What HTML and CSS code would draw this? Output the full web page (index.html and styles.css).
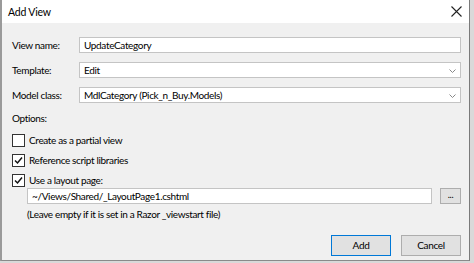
FILE: index.html
```
<!DOCTYPE html>
<html lang="en">
<head>
    <meta charset="UTF-8">
    <title>Add View</title>
    <link rel="stylesheet" href="styles.css">
</head>
<body>
    <div class="dialog">
        <div class="titlebar">
            <span class="title">Add View</span>
            <svg class="close" width="11" height="11" viewBox="0 0 11 11">
                <path d="M0.5 0.5 L10.5 10.5 M10.5 0.5 L0.5 10.5" stroke="#222" stroke-width="1.1" fill="none"/>
            </svg>
        </div>
        <div class="content">
            <div class="field">
                <label>View name:</label>
                <div class="box">UpdateCategory</div>
            </div>
            <div class="field">
                <label>Template:</label>
                <div class="box select">Edit
                    <svg class="arrow" width="7" height="4" viewBox="0 0 7 4"><path d="M0.5 0.5 L3.5 3.5 L6.5 0.5" stroke="#888" fill="none"/></svg>
                </div>
            </div>
            <div class="field">
                <label>Model class:</label>
                <div class="box select">MdlCategory (Pick_n_Buy.Models)
                    <svg class="arrow" width="7" height="4" viewBox="0 0 7 4"><path d="M0.5 0.5 L3.5 3.5 L6.5 0.5" stroke="#888" fill="none"/></svg>
                </div>
            </div>
            <div class="options-label">Options:</div>
            <div class="check">
                <span class="cb"></span>
                <span>Create as a partial view</span>
            </div>
            <div class="check">
                <span class="cb">
                    <svg width="11" height="11" viewBox="0 0 11 11"><path d="M2 5.5 L4.5 8 L9 2.5" stroke="#111" stroke-width="1.5" fill="none"/></svg>
                </span>
                <span>Reference script libraries</span>
            </div>
            <div class="check">
                <span class="cb">
                    <svg width="11" height="11" viewBox="0 0 11 11"><path d="M2 5.5 L4.5 8 L9 2.5" stroke="#111" stroke-width="1.5" fill="none"/></svg>
                </span>
                <span>Use a layout page:</span>
            </div>
            <div class="layout-row">
                <div class="box path">~/Views/Shared/_LayoutPage1.cshtml</div>
                <div class="browse">...</div>
            </div>
            <div class="hint">(Leave empty if it is set in a Razor _viewstart file)</div>
            <div class="buttons">
                <div class="btn default">Add</div>
                <div class="btn">Cancel</div>
            </div>
        </div>
    </div>
</body>
</html>
```
FILE: styles.css
```
body {
    margin: 0;
    background-color: #d9d9d9;
    font-family: Lato, "Noto Sans", sans-serif;
    font-size: 10px;
    letter-spacing: -0.35px;
    color: #000;
}
.dialog {
    width: 470px;
    height: 261px;
    border-left: 2px solid #9a9a9a;
    border-right: 1px solid #7a7a7a;
    border-bottom: 1px solid #8a8a8a;
    background-color: #f0f0f0;
    box-sizing: border-box;
}
.titlebar {
    height: 23px;
    background: white;
    display: flex;
    align-items: center;
    justify-content: space-between;
    padding: 0 7px 0 6px;
}
.title {
    font-size: 10.5px;
    letter-spacing: -0.2px;
}
.content {
    padding: 14px 8px 0 10px;
}
.field {
    display: flex;
    align-items: center;
    height: 16px;
    margin-bottom: 9px;
}
.field label {
    width: 67px;
    flex-shrink: 0;
}
.box {
    flex: 1;
    height: 16px;
    line-height: 14px;
    box-sizing: border-box;
    border: 1px solid #c4c4c4;
    background: white;
    padding-left: 4px;
    white-space: nowrap;
}
.select {
    position: relative;
}
.arrow {
    position: absolute;
    right: 4px;
    top: 6px;
}
.options-label {
    height: 14px;
    line-height: 14px;
    margin-top: -1px;
    margin-bottom: 5px;
}
.check {
    display: flex;
    align-items: center;
    height: 20px;
}
.cb {
    width: 13px;
    height: 13px;
    box-sizing: border-box;
    border: 1px solid #333;
    background: white;
    margin-right: 4px;
    display: flex;
    align-items: center;
    justify-content: center;
}
.layout-row {
    display: flex;
    align-items: center;
    margin-left: 15px;
    margin-top: -2px;
}
.path {
    flex: 1;
}
.browse {
    width: 21px;
    height: 16px;
    box-sizing: border-box;
    border: 1px solid #adadad;
    background: #e1e1e1;
    margin-left: 8px;
    font-size: 9px;
    line-height: 12px;
    text-align: center;
}
.hint {
    margin-left: 15px;
    margin-top: 2px;
    height: 16px;
    line-height: 16px;
}
.buttons {
    display: flex;
    justify-content: flex-end;
    margin-top: 13px;
    gap: 10px;
}
.btn {
    width: 60px;
    height: 21px;
    box-sizing: border-box;
    border: 1px solid #adadad;
    background: #e1e1e1;
    text-align: center;
    line-height: 19px;
}
.btn.default {
    border: 1px solid #0078d7;
}
```
